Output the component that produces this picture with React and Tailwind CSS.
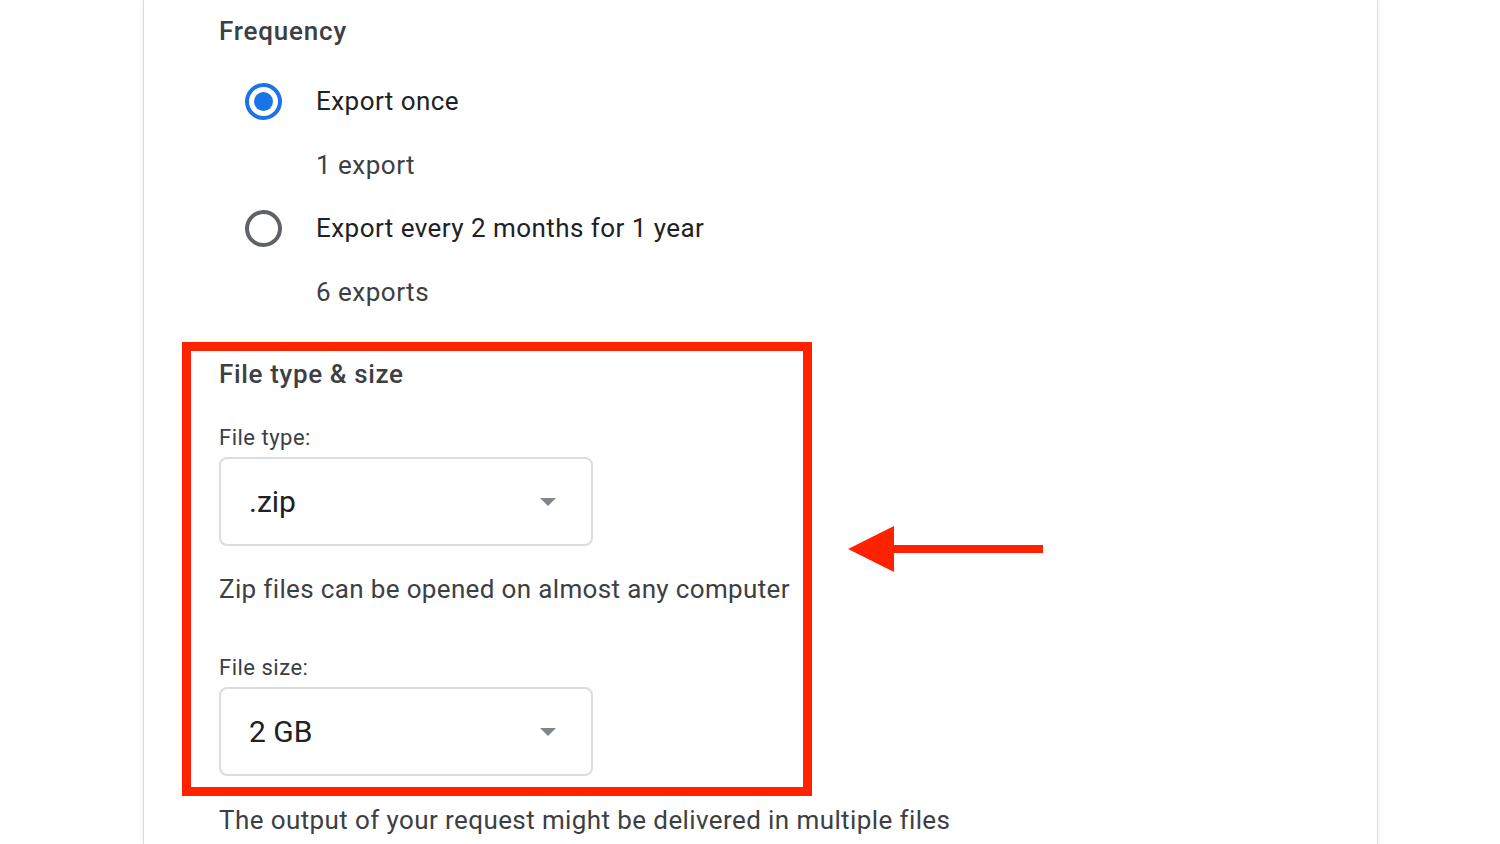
import React from "react";

function Radio({ checked }) {
  return checked ? (
    <div className="w-[37px] h-[37px] rounded-full border-[4px] border-[#1a73e8] flex items-center justify-center shrink-0">
      <div className="w-[19px] h-[19px] rounded-full bg-[#1a73e8]" />
    </div>
  ) : (
    <div className="w-[37px] h-[37px] rounded-full border-[4px] border-[#5f6368] shrink-0" />
  );
}

function Select({ value }) {
  return (
    <div className="w-[374px] h-[89px] rounded-[8px] border-2 border-[#dadce0] flex items-center justify-between pl-[28px] pr-[35px]">
      <span className="text-[30px] leading-[36px] text-[#202124]">{value}</span>
      <svg width="16" height="8" viewBox="0 0 16 8">
        <polygon points="0,0 16,0 8,8" fill="#80868b" />
      </svg>
    </div>
  );
}

export default function App() {
  return (
    <div
      className="relative w-[1500px] h-[844px] overflow-hidden bg-white"
      style={{ fontFamily: "Roboto, 'Noto Sans', Arial, sans-serif" }}
    >
      <div className="ml-[143px] w-[1235px] h-[844px] border-x border-[#dadce0] shadow-[0_0_3px_rgba(60,64,67,0.15)] pl-[75px] pt-[13px]">
        <div className="text-[26px] leading-[36px] font-medium text-[#3c4043] tracking-[0.8px]">Frequency</div>

        <div className="ml-[26px] mt-[33px] flex items-center h-[38px]">
          <Radio checked />
          <span className="ml-[34px] text-[26px] leading-[36px] text-[#202124] tracking-[0.45px]">Export once</span>
        </div>
        <div className="ml-[97px] mt-[27px] text-[26px] leading-[36px] text-[#3c4043] tracking-[0.5px]">1 export</div>

        <div className="ml-[26px] mt-[26px] flex items-center h-[38px]">
          <Radio />
          <span className="ml-[34px] text-[26px] leading-[36px] text-[#202124] tracking-[0.45px]">Export every 2 months for 1 year</span>
        </div>
        <div className="ml-[97px] mt-[27px] text-[26px] leading-[36px] text-[#3c4043] tracking-[0.5px]">6 exports</div>

        <div className="mt-[32px] ml-[-37px] w-[630px] border-[9px] border-[#ff2200] pl-[28px] pt-[5px] pb-[11px]">
          <div className="text-[26px] leading-[36px] font-medium text-[#3c4043] tracking-[0.65px]">File type &amp; size</div>
          <div className="mt-[31px] text-[22px] leading-[30px] text-[#3c4043] tracking-[0.5px]">File type:</div>
          <div className="mt-[4px]">
            <Select value=".zip" />
          </div>
          <div className="mt-[25px] text-[26px] leading-[36px] text-[#3c4043] whitespace-nowrap tracking-[0.35px]">
            Zip files can be opened on almost any computer
          </div>
          <div className="mt-[46px] text-[22px] leading-[30px] text-[#3c4043] tracking-[0.5px]">File size:</div>
          <div className="mt-[4px]">
            <Select value="2 GB" />
          </div>
        </div>

        <div className="mt-[6px] text-[26px] leading-[36px] text-[#3c4043] whitespace-nowrap tracking-[0.4px]">
          The output of your request might be delivered in multiple files
        </div>
      </div>

      <svg className="absolute left-[846px] top-[524px]" width="200" height="50" viewBox="0 0 200 50">
        <polygon points="2,25 48,2 48,48" fill="#ff2200" />
        <rect x="46" y="21" width="151" height="8" fill="#ff2200" />
      </svg>
    </div>
  );
}
